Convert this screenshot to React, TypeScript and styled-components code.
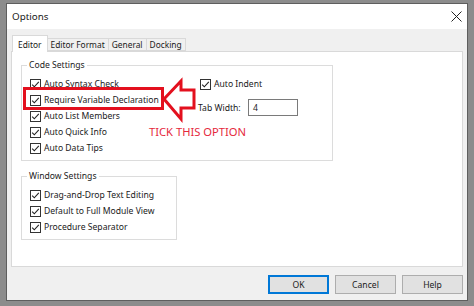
import styled, { createGlobalStyle } from 'styled-components'

const GlobalStyle = createGlobalStyle`
  html, body {
    margin: 0;
    padding: 0;
    background: #8c8c8c;
  }
  body {
    font-family: 'Segoe UI', 'Noto Sans', sans-serif;
    font-size: 8.6px;
    color: #1a1a1a;
  }
`

function CheckBox(): JSX.Element {
  return (
    <svg width="11" height="11" viewBox="0 0 11 11">
      <rect x="0.5" y="0.5" width="10" height="10" fill="#fff" stroke="#333" />
      <polyline
        points="2.2,5.6 4.3,7.8 8.8,2.8"
        fill="none"
        stroke="#222"
        strokeWidth="1.1"
      />
    </svg>
  )
}

function Check({ children }: { children: string }): JSX.Element {
  return (
    <CheckRow>
      <CheckBox />
      <span>{children}</span>
    </CheckRow>
  )
}

export default function App(): JSX.Element {
  return (
    <>
      <GlobalStyle />
      <Frame>
        <Dialog>
          <TitleBar>
            <Title>Options</Title>
            <svg width="11" height="11" viewBox="0 0 11 11">
              <path d="M0.5 0.5 L10.5 10.5 M10.5 0.5 L0.5 10.5" stroke="#222" strokeWidth="1" />
            </svg>
          </TitleBar>
          <Body>
            <TabRow>
              <Tab active>Editor</Tab>
              <Tab>Editor Format</Tab>
              <Tab>General</Tab>
              <Tab>Docking</Tab>
            </TabRow>
            <Panel>
              <Group width={312}>
                <Legend>Code Settings</Legend>
                <Columns>
                  <Column>
                    <Check>Auto Syntax Check</Check>
                    <Check>Require Variable Declaration</Check>
                    <Check>Auto List Members</Check>
                    <Check>Auto Quick Info</Check>
                    <Check>Auto Data Tips</Check>
                  </Column>
                  <Column>
                    <Check>Auto Indent</Check>
                    <FieldRow>
                      <FieldLabel>Tab Width:</FieldLabel>
                      <TextBox>4</TextBox>
                    </FieldRow>
                  </Column>
                </Columns>
              </Group>
              <Group width={156} gapTop={9}>
                <Legend>Window Settings</Legend>
                <Column>
                  <Check>Drag-and-Drop Text Editing</Check>
                  <Check>Default to Full Module View</Check>
                  <Check>Procedure Separator</Check>
                </Column>
              </Group>

              <RedBox />
              <Arrow width="40" height="48" viewBox="0 0 40 48">
                <polygon
                  points="4,23 21,5 21,14 34,14 34,32 21,32 21,43"
                  fill="#fff"
                  stroke="#e3101e"
                  strokeWidth="3"
                  strokeLinejoin="miter"
                />
              </Arrow>
              <Note>TICK THIS OPTION</Note>
            </Panel>
          </Body>
          <Footer>
            <Button primary>OK</Button>
            <Button>Cancel</Button>
            <Button>Help</Button>
          </Footer>
        </Dialog>
      </Frame>
    </>
  )
}

const Frame = styled.div`
  box-sizing: border-box;
  width: 474px;
  height: 306px;
  padding: 3px 6px 5px 6px;
  background: #8c8c8c;
`

const Dialog = styled.div`
  box-sizing: border-box;
  height: 100%;
  display: flex;
  flex-direction: column;
  background: #f0f0f0;
  border: 1px solid #5e5e5e;
`

const TitleBar = styled.div`
  height: 25px;
  background: #fff;
  display: flex;
  align-items: center;
  justify-content: space-between;
  padding: 0 5px 0 5px;
`

const Title = styled.span`
  font-size: 9.8px;
`

const Body = styled.div`
  padding: 6px 4px 0 4px;
`

const TabRow = styled.div`
  display: flex;
  align-items: flex-end;
  height: 16px;
  padding-left: 1px;
`

const Tab = styled.div<{ active?: boolean }>`
  box-sizing: border-box;
  height: ${({ active }) => (active ? '17px' : '13px')};
  padding: ${({ active }) => (active ? '0 5px' : '0 3px')};
  margin-bottom: ${({ active }) => (active ? '-1px' : '0')};
  margin-left: ${({ active }) => (active ? '0' : '-1px')};
  background: ${({ active }) => (active ? '#fff' : '#f0f0f0')};
  border: 1px solid #d9d9d9;
  border-bottom: ${({ active }) => (active ? 'none' : '1px solid #d9d9d9')};
  font-size: 8.4px;
  display: flex;
  align-items: center;
  position: relative;
  z-index: ${({ active }) => (active ? 1 : 0)};
`

const Panel = styled.div`
  position: relative;
  box-sizing: border-box;
  height: 216px;
  background: #fff;
  border: 1px solid #d9d9d9;
  padding: 7px 9px 0 9px;
`

const Group = styled.fieldset<{ width: number; gapTop?: number }>`
  box-sizing: border-box;
  width: ${({ width }) => width}px;
  margin: ${({ gapTop }) => gapTop ?? 0}px 0 0 0;
  padding: 5px 8px 4px 8px;
  border: 1px solid #dcdcdc;
`

const Legend = styled.legend`
  margin-left: -3px;
  padding: 0 2px;
  line-height: 12px;
  color: #222;
`

const Columns = styled.div`
  display: grid;
  grid-template-columns: 170px 1fr;
`

const Column = styled.div`
  display: flex;
  flex-direction: column;
`

const CheckRow = styled.div`
  display: flex;
  align-items: center;
  gap: 3px;
  height: 16px;
  white-space: nowrap;
`

const FieldRow = styled.div`
  display: flex;
  align-items: center;
  margin-top: 7px;
  margin-left: -2px;
`

const FieldLabel = styled.span`
  width: 50px;
`

const TextBox = styled.div`
  box-sizing: border-box;
  width: 50px;
  height: 17px;
  border: 1px solid #7a7a7a;
  padding-left: 4px;
  display: flex;
  align-items: center;
`

const RedBox = styled.div`
  position: absolute;
  left: 11px;
  top: 35px;
  width: 141px;
  height: 23px;
  box-sizing: border-box;
  border: 3px solid #e3101e;
`

const Arrow = styled.svg`
  position: absolute;
  left: 148px;
  top: 24px;
`

const Note = styled.div`
  position: absolute;
  left: 137px;
  top: 73px;
  font-size: 11.2px;
  line-height: 14px;
  color: #e5283c;
  white-space: nowrap;
`

const Footer = styled.div`
  flex: 1;
  display: flex;
  justify-content: flex-end;
  align-items: flex-start;
  gap: 6px;
  padding: 8px 4px 0 0;
`

const Button = styled.div<{ primary?: boolean }>`
  box-sizing: border-box;
  width: 61px;
  height: 19px;
  display: flex;
  align-items: center;
  justify-content: center;
  background: #e1e1e1;
  border: 1px solid ${({ primary }) => (primary ? '#0078d7' : '#adadad')};
  box-shadow: ${({ primary }) => (primary ? 'inset 0 0 0 1px #0078d7' : 'none')};
`
